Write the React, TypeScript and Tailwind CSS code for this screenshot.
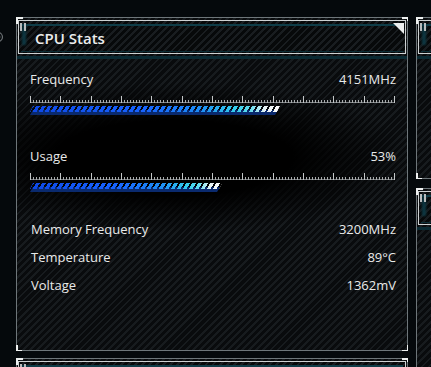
import React from 'react'

const ticks = Array.from({ length: 121 }, (_, i) => ({
  x: Math.round((i * 364) / 120) + 0.5,
  major: i % 10 === 0,
}))

function Ruler() {
  return (
    <svg width="365" height="7" className="block" shapeRendering="crispEdges">
      <rect x="0" y="6" width="365" height="1" fill="#7d8184" />
      {ticks.map((t, i) => (
        <line
          key={i}
          x1={t.x}
          x2={t.x}
          y1={t.major ? 0 : 3.5}
          y2={7}
          stroke={t.major ? '#c4c7c8' : '#a9acad'}
          strokeWidth="1"
        />
      ))}
    </svg>
  )
}

function Bar({ width }: { width: number }) {
  return (
    <div className="relative mt-[3px] h-[9px]" style={{ width }}>
      <div className="absolute left-0 right-[2px] top-[4px] h-[5px] bg-[#0a2a6e] [clip-path:polygon(3px_0,100%_0,calc(100%_-_3px)_100%,0_100%)]" />
      <div className="absolute inset-x-0 top-0 h-[6px] bg-[linear-gradient(90deg,#0d48e6_0%,#1763ff_45%,#1c8cf6_68%,#33cdec_82%,#5fdcef_88%,#e9f3f5_94%,#ffffff_100%)] [mask-image:repeating-linear-gradient(120deg,#000_0px,#000_3.4px,transparent_3.4px,transparent_5.2px)] [clip-path:polygon(3px_0,100%_0,calc(100%_-_3px)_100%,0_100%)]" />
    </div>
  )
}

function Metric({ label, value, width, className = '' }: { label: string; value: string; width: number; className?: string }) {
  return (
    <div className={className}>
      <div className="flex h-[20px] items-center justify-between text-[13px] leading-[20px] text-[#e9eaea]">
        <span>{label}</span>
        <span>{value}</span>
      </div>
      <div className="mt-[7px]">
        <Ruler />
      </div>
      <Bar width={width} />
    </div>
  )
}

function Corners() {
  const c = 'absolute bg-[#eef0f0]'
  return (
    <>
      <div className={`${c} -left-px -top-px h-[2px] w-[7px]`} />
      <div className={`${c} -left-px -top-px h-[7px] w-[2px]`} />
      <div className={`${c} -right-px -top-px h-[2px] w-[6px]`} />
      <div className={`${c} -right-px -top-px h-[4px] w-[1px]`} />
      <div className={`${c} -left-px -bottom-px h-[1px] w-[6px]`} />
      <div className={`${c} -left-px -bottom-px h-[6px] w-[2px]`} />
      <div className={`${c} -right-px -bottom-px h-[1px] w-[6px]`} />
      <div className={`${c} -right-px -bottom-px h-[6px] w-[1px]`} />
    </>
  )
}

function Header({ title, triangle }: { title?: string; triangle?: boolean }) {
  return (
    <div className="relative mx-px mt-[2px] flex h-[34px] shrink-0 items-center border border-[#cdd1d2] bg-[repeating-linear-gradient(135deg,#07090a_0px,#07090a_3px,#191d20_3px,#191d20_5px)] pl-[16px] pt-[2px]">
      <div className="absolute left-[2px] right-[2px] top-[3px] h-[2px] bg-[#0e3c47] blur-[0.5px]" />
      <div className="absolute left-[3px] top-[4px] h-[20px] w-[4px] bg-[#0d3843] blur-[1px]" />
      <div className="absolute bottom-[1px] left-[2px] right-[2px] h-[1px] bg-[#0b2d36]" />
      <div className="absolute left-[1px] top-[2px] h-[8px] w-[2px] bg-[#b7bbbc]" />
      <div className="absolute left-[5px] top-[2px] h-[8px] w-[2px] bg-[#b7bbbc]" />
      {triangle && (
        <svg width="11" height="11" className="absolute right-[1px] top-[2px]">
          <polygon points="0,0 11,0 11,11" fill="#eceeee" />
        </svg>
      )}
      {title && <span className="text-[15px] font-semibold text-[#eceded]">{title}</span>}
    </div>
  )
}

function Panel({ height, title, triangle, children }: { height: number; title?: string; triangle?: boolean; children?: React.ReactNode }) {
  return (
    <div
      className="relative flex w-[392px] shrink-0 flex-col border border-[#6e767a] bg-[repeating-linear-gradient(135deg,#090b0d_0px,#090b0d_3px,#171b1e_3px,#171b1e_5px)]"
      style={{ height }}
    >
      <Header title={title} triangle={triangle} />
      <div className="mt-[2px] h-[3px] shrink-0 bg-[#0a2a33] blur-[0.5px]" />
      {children}
      <Corners />
    </div>
  )
}

export default function App() {
  return (
    <div className="relative h-[367px] w-[431px] overflow-hidden bg-[#05090c] font-['Open_Sans',sans-serif]">
      <svg width="12" height="14" className="absolute -left-[8px] top-[30px]">
        <circle cx="6" cy="7" r="4.5" fill="none" stroke="#6b7073" strokeWidth="1.2" />
        <circle cx="6" cy="7" r="2" fill="none" stroke="#53585b" strokeWidth="1" />
      </svg>
      <div className="flex gap-[8px] pl-[16px] pt-[17px]">
        <div className="flex shrink-0 flex-col gap-[7px]">
          <Panel height={334} title="CPU Stats" triangle>
            <div className="relative flex-1 pl-[13px] pr-[11px] pt-[10px]">
              <div className="pointer-events-none absolute inset-0 bg-[radial-gradient(240px_75px_at_40%_34%,#000_0%,#000_50%,transparent_100%)]" />
              <div className="relative">
                <Metric label="Frequency" value="4151MHz" width={250} />
                <Metric label="Usage" value="53%" width={192} className="mt-[31px]" />
                <div className="mt-[23px] text-[13px] leading-[28px] text-[#e9eaea]">
                  <div className="flex justify-between pl-px">
                    <span>Memory Frequency</span>
                    <span>3200MHz</span>
                  </div>
                  <div className="flex justify-between pl-px">
                    <span>Temperature</span>
                    <span>89°C</span>
                  </div>
                  <div className="flex justify-between pl-px">
                    <span>Voltage</span>
                    <span>1362mV</span>
                  </div>
                </div>
              </div>
            </div>
          </Panel>
          <Panel height={120} />
        </div>
        <div className="flex shrink-0 flex-col gap-[9px]">
          <Panel height={162} />
          <Panel height={200} />
        </div>
      </div>
    </div>
  )
}
